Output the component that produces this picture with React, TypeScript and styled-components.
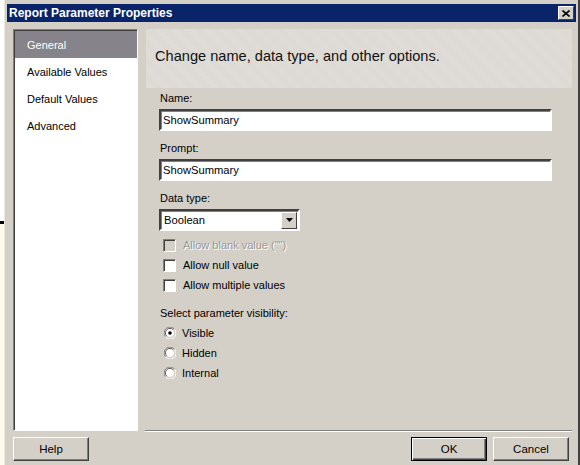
import React from "react";
import styled, { createGlobalStyle, css } from "styled-components";

const GlobalStyle = createGlobalStyle`
  html, body {
    margin: 0;
    padding: 0;
    background: #ffffff;
  }
  body {
    font-family: "Liberation Sans", Arial, sans-serif;
    font-size: 11px;
    color: #000;
  }
`;

const face = "#d4d0c8";

const Screen = styled.div`
  width: 580px;
  height: 465px;
  display: flex;
  overflow: hidden;
`;

const BackdropStrip = styled.div`
  width: 4px;
  flex: none;
  background: linear-gradient(
    to bottom,
    #ffffff 0px,
    #ffffff 221px,
    #000000 221px,
    #000000 224px,
    #fffbea 224px,
    #fffbea 465px
  );
`;

const Dialog = styled.div`
  flex: 1;
  display: flex;
  flex-direction: column;
  background: ${face};
  border-left: 1px solid #ece9e2;
  border-right: 2px solid #404040;
  padding: 4px 2px 0 2px;
  box-sizing: border-box;
`;

const TitleBar = styled.div`
  height: 18px;
  background: #0a246a;
  display: flex;
  align-items: center;
  justify-content: space-between;
  padding: 0 2px 0 2px;
`;

const TitleText = styled.span`
  color: #ffffff;
  font-weight: bold;
  font-size: 12px;
`;

const CloseButton = styled.div`
  width: 16px;
  height: 14px;
  box-sizing: border-box;
  background: ${face};
  border: 1px solid;
  border-color: #ffffff #404040 #404040 #ffffff;
  display: flex;
  align-items: center;
  justify-content: center;
`;

const Body = styled.div`
  flex: 1;
  display: flex;
  flex-direction: column;
  padding: 7px 4px 0 6px;
`;

const MainRow = styled.div`
  display: flex;
  height: 402px;
  gap: 7px;
`;

const NavPanel = styled.div`
  width: 125px;
  box-sizing: border-box;
  background: #ffffff;
  border: 1px solid;
  border-color: #808080 #ffffff #ffffff #808080;
  box-shadow: inset 1px 1px 0 #404040;
  padding: 1px 0 0 1px;
`;

const NavItem = styled.div<{ $active?: boolean }>`
  height: 27px;
  display: flex;
  align-items: center;
  padding-left: 12px;
  font-size: 11px;
  ${({ $active }) =>
    $active
      ? css`
          background: #86848a;
          color: #ffffff;
        `
      : css`
          color: #000000;
        `}
`;

const RightPanel = styled.div`
  flex: 1;
  height: 401px;
  display: flex;
  flex-direction: column;
  border-bottom: 1px solid #808080;
  box-shadow: 0 1px 0 #ffffff;
`;

const HeaderBand = styled.div`
  height: 59px;
  box-sizing: border-box;
  margin-left: 1px;
  background-color: #dcd9d4;
  background-image: repeating-linear-gradient(
    45deg,
    rgba(255, 255, 255, 0.12) 0px,
    rgba(255, 255, 255, 0.12) 1px,
    transparent 1px,
    transparent 2px
  );
  display: flex;
  align-items: center;
  padding: 0 0 6px 9px;
  font-size: 14.6px;
  color: #111;
`;

const Form = styled.div`
  display: flex;
  flex-direction: column;
  padding: 3px 0 0 14px;
`;

const Label = styled.div<{ $top?: number }>`
  height: 14px;
  line-height: 14px;
  margin-top: ${({ $top }) => $top ?? 0}px;
  padding-left: 1px;
`;

const sunken = css`
  box-sizing: border-box;
  border: 2px solid;
  border-color: #404040 #ffffff #ffffff #404040;
  box-shadow: inset 1px 1px 0 #808080, 1px 1px 0 ${face};
  background: #ffffff;
`;

const TextBox = styled.div`
  ${sunken};
  width: 393px;
  height: 22px;
  margin-top: 4px;
  display: flex;
  align-items: center;
  padding-left: 2px;
  font-size: 11.2px;
`;

const Combo = styled.div`
  ${sunken};
  width: 141px;
  height: 22px;
  margin-top: 4px;
  display: flex;
  align-items: center;
  justify-content: space-between;
  padding: 0 1px 0 3px;
  font-size: 11.2px;
`;

const ComboButton = styled.div`
  width: 16px;
  height: 17px;
  box-sizing: border-box;
  background: ${face};
  border: 1px solid;
  border-color: #ffffff #404040 #404040 #ffffff;
  display: flex;
  align-items: center;
  justify-content: center;
`;

const CheckRow = styled.div<{ $disabled?: boolean; $top?: number }>`
  display: flex;
  align-items: center;
  height: 14px;
  margin-top: ${({ $top }) => $top ?? 6}px;
  padding-left: 4px;
  gap: 7px;
  color: ${({ $disabled }) => ($disabled ? "#9a9894" : "#000")};
  ${({ $disabled }) =>
    $disabled &&
    css`
      text-shadow: 1px 1px 0 #ffffff;
    `}
`;

const CheckBox = styled.div<{ $disabled?: boolean }>`
  width: 13px;
  height: 13px;
  box-sizing: border-box;
  border: 1px solid;
  border-color: #808080 #ffffff #ffffff #808080;
  box-shadow: inset 1px 1px 0 #404040;
  background: ${({ $disabled }) => ($disabled ? face : "#ffffff")};
`;

const RadioRow = styled.div<{ $top?: number }>`
  display: flex;
  align-items: center;
  height: 14px;
  margin-top: ${({ $top }) => $top ?? 6}px;
  padding-left: 5px;
  gap: 6px;
`;

const Footer = styled.div`
  display: flex;
  align-items: center;
  justify-content: space-between;
  margin-top: 6px;
  padding-right: 3px;
`;

const ButtonGroup = styled.div`
  display: flex;
  gap: 6px;
`;

const Button = styled.div<{ $default?: boolean }>`
  width: 76px;
  height: 24px;
  box-sizing: border-box;
  background: ${face};
  display: flex;
  align-items: center;
  justify-content: center;
  font-size: 11.5px;
  ${({ $default }) =>
    $default
      ? css`
          border: 1px solid #000000;
          box-shadow: inset 1px 1px 0 #ffffff, inset -1px -1px 0 #404040,
            inset -2px -2px 0 #808080;
        `
      : css`
          border: 1px solid;
          border-color: #ffffff #404040 #404040 #ffffff;
          box-shadow: inset -1px -1px 0 #808080;
        `}
`;

const Radio: React.FC<{ checked?: boolean }> = ({ checked }) => (
  <svg width="12" height="12" viewBox="0 0 12 12">
    <path d="M10.5 2.2 A5.5 5.5 0 0 0 1.5 9.8" fill="none" stroke="#808080" />
    <path d="M9.2 3 A4.2 4.2 0 0 0 2.8 8.9" fill="none" stroke="#404040" />
    <circle cx="6" cy="6" r="4" fill="#ffffff" />
    <path d="M10.6 2.4 A5.5 5.5 0 0 1 1.6 10" fill="none" stroke="#ffffff" />
    <path d="M9.4 3.3 A4.2 4.2 0 0 1 3.2 9.4" fill="none" stroke={face} />
    {checked && <circle cx="6" cy="6" r="1.8" fill="#000000" />}
  </svg>
);

const App: React.FC = () => {
  const navItems = ["General", "Available Values", "Default Values", "Advanced"];

  return (
    <>
      <GlobalStyle />
      <Screen>
        <BackdropStrip />
        <Dialog>
          <TitleBar>
            <TitleText>Report Parameter Properties</TitleText>
            <CloseButton>
              <svg width="8" height="7" viewBox="0 0 8 7">
                <path d="M0.5 0.5 L7.5 6.5 M7.5 0.5 L0.5 6.5" stroke="#000" strokeWidth="1.6" />
              </svg>
            </CloseButton>
          </TitleBar>
          <Body>
            <MainRow>
              <NavPanel>
                {navItems.map((item, i) => (
                  <NavItem key={item} $active={i === 0}>
                    {item}
                  </NavItem>
                ))}
              </NavPanel>
              <RightPanel>
                <HeaderBand>Change name, data type, and other options.</HeaderBand>
                <Form>
                  <Label>Name:</Label>
                  <TextBox>ShowSummary</TextBox>
                  <Label $top={10}>Prompt:</Label>
                  <TextBox>ShowSummary</TextBox>
                  <Label $top={10}>Data type:</Label>
                  <Combo>
                    Boolean
                    <ComboButton>
                      <svg width="7" height="4" viewBox="0 0 7 4">
                        <path d="M0 0 H7 L3.5 4 Z" fill="#000" />
                      </svg>
                    </ComboButton>
                  </Combo>
                  <CheckRow $disabled $top={7}>
                    <CheckBox $disabled />
                    Allow blank value ("")
                  </CheckRow>
                  <CheckRow>
                    <CheckBox />
                    Allow null value
                  </CheckRow>
                  <CheckRow>
                    <CheckBox />
                    Allow multiple values
                  </CheckRow>
                  <Label $top={14}>Select parameter visibility:</Label>
                  <RadioRow $top={6}>
                    <Radio checked />
                    Visible
                  </RadioRow>
                  <RadioRow>
                    <Radio />
                    Hidden
                  </RadioRow>
                  <RadioRow>
                    <Radio />
                    Internal
                  </RadioRow>
                </Form>
              </RightPanel>
            </MainRow>
            <Footer>
              <Button>Help</Button>
              <ButtonGroup>
                <Button $default>OK</Button>
                <Button>Cancel</Button>
              </ButtonGroup>
            </Footer>
          </Body>
        </Dialog>
      </Screen>
    </>
  );
};

export default App;
